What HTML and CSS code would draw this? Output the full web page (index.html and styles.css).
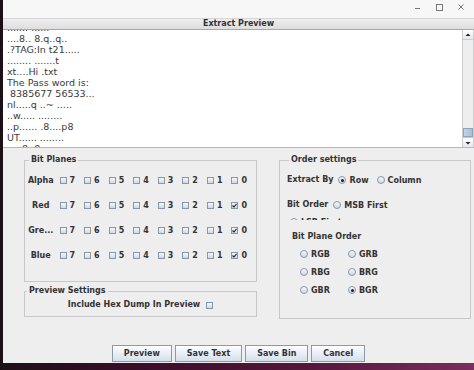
FILE: index.html
```html
<!DOCTYPE html>
<html lang="en">
<head>
    <meta charset="UTF-8">
    <meta name="viewport" content="width=device-width, initial-scale=1.0">
    <title>Extract Preview</title>
    <link rel="stylesheet" href="styles.css">
</head>
<body>

    <div class="window">
        <div class="titlebar">
            <svg class="wincontrols" width="60" height="18" viewBox="0 0 60 18">
                <line x1="5" y1="8.5" x2="10" y2="8.5" stroke="#777" stroke-width="1"/>
                <rect x="26.5" y="4.5" width="6" height="6" fill="none" stroke="#777" stroke-width="1"/>
                <path d="M48.5 4.5 L53.5 9.5 M53.5 4.5 L48.5 9.5" stroke="#777" stroke-width="1"/>
            </svg>
        </div>
        <div class="frame-title">Extract Preview</div>

        <div class="textarea">
            <div class="text">
                <div class="lines">....... ......
....8.. 8.q..q..
.?TAG:In t21.....
........ .......t
xt....Hi .txt
The Pass word is:
 8385677 56533...
nl.....q ..~ .....
..w..... ........
..p...... .8....p8
UT...... ........
.....8..8..</div>
            </div>
            <div class="scrollbar">
                <div class="sb-btn"><svg width="10" height="10" viewBox="0 0 10 10"><path d="M2.5 6 L5 3.5 L7.5 6 Z" fill="#222"/></svg></div>
                <div class="sb-track"><div class="sb-thumb"></div></div>
                <div class="sb-btn"><svg width="10" height="10" viewBox="0 0 10 10"><path d="M2.5 4 L5 6.5 L7.5 4 Z" fill="#222"/></svg></div>
            </div>
        </div>

        <div class="settings">
            <div class="left-col">
                <fieldset class="bit-planes">
                    <legend>Bit Planes</legend>
                    <div class="plane-row">
                        <span class="plane-name">Alpha</span>
                        <span class="bit"><span class="cb"></span>7</span>
                        <span class="bit"><span class="cb"></span>6</span>
                        <span class="bit"><span class="cb"></span>5</span>
                        <span class="bit"><span class="cb"></span>4</span>
                        <span class="bit"><span class="cb"></span>3</span>
                        <span class="bit"><span class="cb"></span>2</span>
                        <span class="bit"><span class="cb"></span>1</span>
                        <span class="bit"><span class="cb"></span>0</span>
                    </div>
                    <div class="plane-row">
                        <span class="plane-name">Red</span>
                        <span class="bit"><span class="cb"></span>7</span>
                        <span class="bit"><span class="cb"></span>6</span>
                        <span class="bit"><span class="cb"></span>5</span>
                        <span class="bit"><span class="cb"></span>4</span>
                        <span class="bit"><span class="cb"></span>3</span>
                        <span class="bit"><span class="cb"></span>2</span>
                        <span class="bit"><span class="cb"></span>1</span>
                        <span class="bit"><span class="cb on"><svg width="5" height="5" viewBox="0 0 5 5"><path d="M0.5 2.5 L2 4 L4.5 0.8" fill="none" stroke="#222" stroke-width="1.1"/></svg></span>0</span>
                    </div>
                    <div class="plane-row">
                        <span class="plane-name">Gre...</span>
                        <span class="bit"><span class="cb"></span>7</span>
                        <span class="bit"><span class="cb"></span>6</span>
                        <span class="bit"><span class="cb"></span>5</span>
                        <span class="bit"><span class="cb"></span>4</span>
                        <span class="bit"><span class="cb"></span>3</span>
                        <span class="bit"><span class="cb"></span>2</span>
                        <span class="bit"><span class="cb"></span>1</span>
                        <span class="bit"><span class="cb on"><svg width="5" height="5" viewBox="0 0 5 5"><path d="M0.5 2.5 L2 4 L4.5 0.8" fill="none" stroke="#222" stroke-width="1.1"/></svg></span>0</span>
                    </div>
                    <div class="plane-row">
                        <span class="plane-name">Blue</span>
                        <span class="bit"><span class="cb"></span>7</span>
                        <span class="bit"><span class="cb"></span>6</span>
                        <span class="bit"><span class="cb"></span>5</span>
                        <span class="bit"><span class="cb"></span>4</span>
                        <span class="bit"><span class="cb"></span>3</span>
                        <span class="bit"><span class="cb"></span>2</span>
                        <span class="bit"><span class="cb"></span>1</span>
                        <span class="bit"><span class="cb on"><svg width="5" height="5" viewBox="0 0 5 5"><path d="M0.5 2.5 L2 4 L4.5 0.8" fill="none" stroke="#222" stroke-width="1.1"/></svg></span>0</span>
                    </div>
                </fieldset>

                <fieldset class="preview-settings">
                    <legend>Preview Settings</legend>
                    <div class="hex-row">Include Hex Dump In Preview <span class="cb"></span></div>
                </fieldset>
            </div>

            <fieldset class="order-settings">
                <legend>Order settings</legend>
                <div class="opt-row extract-by">
                    <span class="opt-label">Extract By</span>
                    <span class="radio-item"><span class="rb on"></span>Row</span>
                    <span class="radio-item"><span class="rb"></span>Column</span>
                </div>
                <div class="bit-order">
                    <div class="opt-row">
                        <span class="opt-label">Bit Order</span>
                        <span class="radio-item"><span class="rb"></span>MSB First</span>
                    </div>
                    <div class="opt-row lsb">
                        <span class="radio-item"><span class="rb"></span>LSB First</span>
                    </div>
                </div>
                <div class="plane-order">
                    <div class="opt-label">Bit Plane Order</div>
                    <div class="plane-grid">
                        <span class="radio-item"><span class="rb"></span>RGB</span>
                        <span class="radio-item"><span class="rb"></span>GRB</span>
                        <span class="radio-item"><span class="rb"></span>RBG</span>
                        <span class="radio-item"><span class="rb"></span>BRG</span>
                        <span class="radio-item"><span class="rb"></span>GBR</span>
                        <span class="radio-item"><span class="rb on"></span>BGR</span>
                    </div>
                </div>
            </fieldset>
        </div>

        <div class="buttons">
            <button class="btn">Preview</button>
            <button class="btn">Save Text</button>
            <button class="btn">Save Bin</button>
            <button class="btn">Cancel</button>
        </div>
    </div>

</body>
</html>
```

FILE: styles.css
```css
html, body {
    margin: 0;
    padding: 0;
}
body {
    width: 474px;
    height: 370px;
    overflow: hidden;
    font-family: "DejaVu Sans", sans-serif;
    background: linear-gradient(90deg, #1c1016 0%, #3a0e28 30%, #55163c 65%, #7a2d5e 100%);
    color: #333333;
}
.window {
    margin-left: 3px;
    width: 471px;
    height: 363px;
    background: #eeeeee;
    display: flex;
    flex-direction: column;
}
.titlebar {
    height: 18px;
    background: #f7f7f7;
    border-bottom: 1px solid #d6d6d6;
    display: flex;
    justify-content: flex-end;
}
.wincontrols {
    margin-right: 4px;
}
.frame-title {
    height: 10px;
    line-height: 10px;
    font-size: 8px;
    font-weight: bold;
    text-align: center;
    background: linear-gradient(#eeeeee, #dedede);
    border-bottom: 1px solid #a8a8a8;
}
.textarea {
    height: 117px;
    border-bottom: 1px solid #b8b8b8;
    display: flex;
    background: white;
}
.text {
    flex: 1;
    overflow: hidden;
    padding-left: 4px;
}
.lines {
    margin-top: -8px;
    white-space: pre;
    font-size: 9.5px;
    line-height: 11px;
    color: #3a3a3a;
}
.scrollbar {
    width: 10px;
    display: flex;
    flex-direction: column;
    background: #eeeeee;
    border-left: 1px solid #cccccc;
    border-right: 1px solid #d0d0d0;
}
.sb-btn {
    height: 10px;
    background: linear-gradient(#ffffff, #e4e9ef);
    border-bottom: 1px solid #c4ccd5;
    box-sizing: border-box;
}
.sb-btn svg {
    display: block;
}
.sb-btn:last-child {
    border-bottom: none;
    border-top: 1px solid #c4ccd5;
}
.sb-track {
    flex: 1;
    display: flex;
    flex-direction: column;
    justify-content: flex-end;
}
.sb-thumb {
    height: 7px;
    background: linear-gradient(90deg, #c2d3e6, #a9c0da);
    border: 1px solid #8aa3bf;
}

.settings {
    flex: 1;
    display: flex;
    gap: 22px;
    padding: 7px 0 0 21px;
}
fieldset {
    margin: 0;
    padding: 0;
    min-width: 0;
    border: 1px solid #c8c8c8;
}
legend {
    font-size: 8px;
    line-height: 10px;
    font-weight: bold;
    padding: 0 2px;
    margin-left: 2px;
    color: #333333;
}
.left-col {
    width: 233px;
    display: flex;
    flex-direction: column;
    gap: 4px;
}
.bit-planes {
    padding: 3px 0 13px 2px;
}
.plane-row {
    height: 25px;
    display: flex;
    align-items: center;
    font-size: 8px;
    font-weight: bold;
}
.plane-name {
    width: 28px;
    margin-right: 5px;
    text-align: center;
}
.bit {
    width: 25px;
    display: flex;
    align-items: center;
    gap: 3px;
}
.cb {
    width: 5px;
    height: 5px;
    border: 1px solid #8797a8;
    background: linear-gradient(#f6f8fb, #cfd9e4);
    display: inline-flex;
    align-items: center;
    justify-content: center;
}
.cb svg {
    display: block;
}
.preview-settings {
    padding: 4px 0 6px 0;
}
.hex-row {
    display: flex;
    align-items: center;
    justify-content: center;
    gap: 6px;
    font-size: 8px;
    line-height: 10px;
    font-weight: bold;
}

.order-settings {
    width: 192px;
    height: 164px;
    box-sizing: border-box;
    padding: 8px 0 0 7px;
    align-self: flex-start;
}
.opt-row {
    height: 14px;
    display: flex;
    align-items: center;
    gap: 5px;
    font-size: 8px;
    font-weight: bold;
}
.opt-label {
    font-size: 8px;
    line-height: 10px;
    font-weight: bold;
}
.extract-by {
    margin-bottom: 11px;
}
.radio-item {
    display: inline-flex;
    align-items: center;
    gap: 3px;
    margin-right: 3px;
    font-size: 8px;
    font-weight: bold;
}
.rb {
    width: 6px;
    height: 6px;
    border-radius: 50%;
    border: 1px solid #8797a8;
    background: linear-gradient(#f6f8fb, #cfd9e4);
    display: inline-flex;
    align-items: center;
    justify-content: center;
}
.rb.on::after {
    content: "";
    width: 3px;
    height: 3px;
    border-radius: 50%;
    background: #1e1e1e;
}
.bit-order {
    height: 22px;
    overflow: hidden;
}
.lsb {
    margin-top: 3px;
    padding-left: 3px;
}
.plane-order {
    padding: 12px 0 0 5px;
}
.plane-grid {
    margin-top: 3px;
    padding-left: 8px;
    display: grid;
    grid-template-columns: 48px 48px;
    grid-auto-rows: 18px;
    align-items: center;
}

.buttons {
    height: 17px;
    margin-bottom: 1px;
    display: flex;
    justify-content: center;
    gap: 3px;
}
.btn {
    height: 17px;
    padding: 0 11px;
    font-family: "DejaVu Sans", sans-serif;
    font-size: 8px;
    font-weight: bold;
    color: #333333;
    border: 1px solid #8a9aab;
    border-radius: 0;
    background: linear-gradient(#ffffff 0%, #eef3f8 35%, #d5e0ec 100%);
    cursor: pointer;
}
```
